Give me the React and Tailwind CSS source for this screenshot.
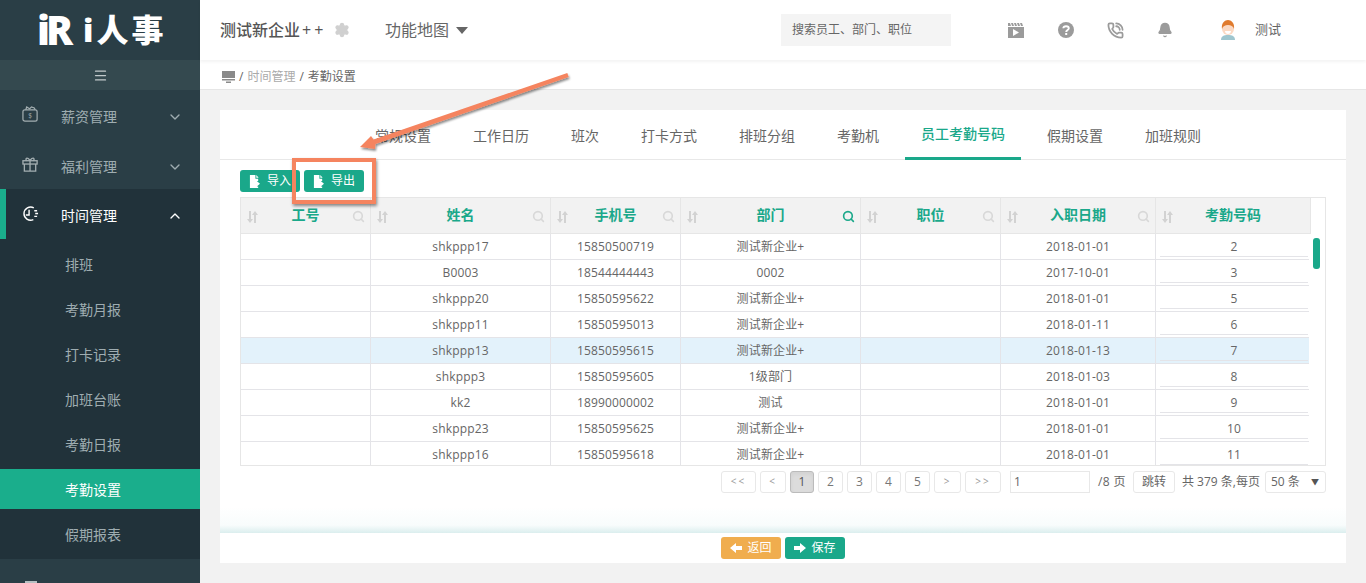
import React from 'react';
import { ChevronDown, ChevronUp, Menu, Search, Settings, Bell, PhoneCall } from 'lucide-react';

const font = { fontFamily: '"Open Sans", "Noto Sans CJK SC", sans-serif' };

const subMenu = ['排班', '考勤月报', '打卡记录', '加班台账', '考勤日报', '考勤设置', '假期报表'];
const tabs = ['常规设置', '工作日历', '班次', '打卡方式', '排班分组', '考勤机', '员工考勤号码', '假期设置', '加班规则'];
const columns = [
    { title: '工号', search: true },
    { title: '姓名', search: true },
    { title: '手机号', search: true },
    { title: '部门', search: true, active: true },
    { title: '职位', search: true },
    { title: '入职日期', search: true },
    { title: '考勤号码' },
];
const rows = [
    ['shkppp17', '15850500719', '测试新企业+', '2018-01-01', '2'],
    ['B0003', '18544444443', '0002', '2017-10-01', '3'],
    ['shkppp20', '15850595622', '测试新企业+', '2018-01-01', '5'],
    ['shkppp11', '15850595013', '测试新企业+', '2018-01-11', '6'],
    ['shkppp13', '15850595615', '测试新企业+', '2018-01-13', '7'],
    ['shkppp3', '15850595605', '1级部门', '2018-01-03', '8'],
    ['kk2', '18990000002', '测试', '2018-01-01', '9'],
    ['shkppp23', '15850595625', '测试新企业+', '2018-01-01', '10'],
    ['shkppp16', '15850595618', '测试新企业+', '2018-01-01', '11'],
];
const grid = 'grid w-[1070px] grid-cols-[130px_180px_130px_180px_140px_155px_155px]';

const FileIcon = () => (
    <svg viewBox="0 0 12 14" className="w-[11px] h-[13px]" fill="#fff">
        <path d="M1 0h6v4h3v2.500h-1.500L12 9.500 8.500 12.500H10V14H1z" />
        <path d="M8 0l2.500 3H8z" />
    </svg>
);

const SortIcon = () => (
    <svg viewBox="0 0 11 12" className="absolute left-[6px] top-[13px] w-[11px] h-[12px]" fill="#d2d2d2">
        <path d="M2 0h2v8h2L3 12 0 8h2zM7 4H5l3-4 3 4H9v8H7z" />
    </svg>
);

const ArrowIcon = ({ left }) => (
    <svg viewBox="0 0 12 10" className={`w-[12px] h-[10px] ${left ? 'rotate-180' : ''}`} fill="#fff">
        <path d="M0 3h6V0l6 5-6 5V7H0z" />
    </svg>
);

const NavItem = ({ icon, label, open }) => (
    <div className={`relative flex items-center h-[50px] pt-[4px] pl-[61px] pr-[17px] text-sm ${open ? 'bg-[#21323a] text-white' : 'text-[#9fadb1]'}`}>
        {open && <div className="absolute left-0 top-0 bottom-0 w-[6px] bg-[#1aae8c]" />}
        <span className={`absolute left-[22px] top-[16px] ${open ? 'text-white' : 'text-[#a3aeb1]'}`}>{icon}</span>
        <span className="flex-1">{label}</span>
        {open ? <ChevronUp size={16} /> : <ChevronDown size={16} />}
    </div>
);

const SalaryIcon = () => (
    <svg viewBox="0 0 18 18" className="w-[17px] h-[17px]" fill="none" stroke="currentColor" strokeWidth="1.300">
        <rect x="1" y="4" width="15" height="12" rx="2" />
        <path d="M4 4l1-3 3 2 2-2 3 1 1 2" />
        <text x="8.500" y="13" fontSize="7" textAnchor="middle" fill="currentColor" stroke="none">$</text>
    </svg>
);
const GiftIcon = () => (
    <svg viewBox="0 0 18 18" className="w-[17px] h-[17px]" fill="none" stroke="currentColor" strokeWidth="1.400">
        <rect x="1" y="5" width="15" height="3.500" />
        <path d="M2.500 8.500V16h12V8.500M8.500 5v11M5 5C3 3 5 .5 8.500 4.500 12 .5 14 3 12 5" />
    </svg>
);
const ClockIcon = () => (
    <svg viewBox="0 0 18 18" className="w-[17px] h-[17px]" fill="none" stroke="currentColor" strokeWidth="1.500">
        <path d="M12.500 3A7 7 0 1 0 12 15.500" />
        <path d="M7.500 5v5.500H4M13 6h3M14 9h3M13 12h3" />
    </svg>
);
const VideoIcon = () => (
    <svg viewBox="0 0 16 15" className="w-[16px] h-[15px]">
        <path fill="#9b9b9b" d="M0 0h2l1 3H0zM3 0h2l1 3H4zM6 0h2l1 3H7zM9 0h2l1 3h-2zM12 0h2l1 3h-2zM0 4h16v11H0z" />
        <path fill="#fff" d="M5 6l6 3.500L5 13z" />
    </svg>
);
const HelpIcon = () => (
    <svg viewBox="0 0 16 16" className="w-[16px] h-[16px]">
        <circle cx="8" cy="8" r="8" fill="#9b9b9b" />
        <path d="M5.300 6.200C5.500 3.500 10.800 3.500 10.800 6.300 10.800 8 8.200 8 8.200 10" fill="none" stroke="#fff" strokeWidth="1.900" />
        <rect x="7.200" y="11" width="2" height="2" fill="#fff" />
    </svg>
);
const ScreenIcon = () => (
    <svg viewBox="0 0 13 12" className="w-[13px] h-[12px]" fill="#8a8a8a">
        <path d="M0 0h13v7H0zM0 8h13v1.500H0zM4 10.500h5V12H4z" />
    </svg>
);
const Avatar = () => (
    <svg viewBox="0 0 18 20" className="w-[18px] h-[20px]">
        <path fill="#9fc6cf" d="M2 20c0-4 3-5 7-5s7 1 7 5z" />
        <circle cx="9" cy="9" r="6" fill="#fbd9c3" />
        <path fill="#e07b2e" d="M3 9C2 3 6 0 9 0s7 3 6 9c-1-3-3-4-6-4S4 6 3 9z" />
        <path fill="#fff" d="M6 11h6c0 2-1.500 3-3 3s-3-1-3-3z" />
    </svg>
);

const PageBtn = ({ children, w = 'w-[25px]', active, faint }) => (
    <div className={`h-[22px] ${w} flex items-center justify-center rounded-[3px] border ${faint ? 'text-[10px] tracking-[2px] text-[#999]' : 'text-xs'} ${active ? 'bg-[#dcdcdc] border-[#bbb] text-[#555] shadow-inner' : 'bg-white border-[#e8e8e8] text-[#777]'}`}>
        {children}
    </div>
);

export default function App() {
    return (
        <div className="relative flex w-[1366px] h-[583px] overflow-hidden bg-[#f2f2f2] text-[#666]" style={font}>
            {/* sidebar */}
            <aside className="w-[200px] shrink-0 bg-[#2a3e46] flex flex-col overflow-hidden">
                <div className="h-[60px] shrink-0 flex items-center pl-[37px] text-white font-black">
                    <span className="w-[46px] text-[40px] leading-none tracking-[-4px]">iR</span>
                    <span className="text-[32px] leading-none tracking-[3px]">i人事</span>
                </div>
                <div className="h-[30px] shrink-0 bg-[#34494f] flex items-center justify-center text-[#c2cacc]">
                    <Menu size={15} />
                </div>
                <NavItem icon={<SalaryIcon />} label="薪资管理" />
                <NavItem icon={<GiftIcon />} label="福利管理" />
                <NavItem icon={<ClockIcon />} label="时间管理" open />
                <div className="bg-[#21323a] pt-[5px] pb-[5px] flex flex-col gap-[5px]">
                    {subMenu.map(s => (
                        <div key={s} className={`h-[40px] pt-[1px] flex items-center pl-[65px] text-sm ${s === '考勤设置' ? 'bg-[#1aae8c] text-white' : 'text-[#9fadb1]'}`}>
                            {s}
                        </div>
                    ))}
                </div>
                <div className="flex-1 pl-[25px] pt-[22px]">
                    <div className="w-[12px] h-[2px] bg-[#b5bfc2]" />
                </div>
            </aside>

            <main className="flex-1 min-w-0 flex flex-col">
                {/* top bar */}
                <header className="h-[60px] bg-white shadow-[0_2px_3px_rgba(0,0,0,0.05)] flex items-center pl-[20px] z-10">
                    <span className="w-[113px] text-base font-medium text-[#555]">测试新企业<span className="ml-[2px] tracking-[3px]">++</span></span>
                    <Settings size={16} className="text-[#d0d0d0] ml-[1px]" fill="#d0d0d0" />
                    <span className="ml-[35px] text-base text-[#666]">功能地图</span>
                    <span className="ml-[7px] w-0 h-0 border-x-[6px] border-x-transparent border-t-[7px] border-t-[#666]" />
                    <div className="ml-[313px] w-[170px] h-[32px] bg-[#f4f4f4] flex items-center pl-[11px] text-xs text-[#666]">搜索员工、部门、职位</div>
                    <div className="ml-[57px] flex items-center gap-[34px] text-[#9b9b9b]">
                        <VideoIcon />
                        <HelpIcon />
                        <PhoneCall size={17} strokeWidth={2.500} className="-ml-[1px]" />
                        <Bell size={16} fill="#9b9b9b" className="-ml-[1px]" />
                    </div>
                    <div className="ml-[46px]"><Avatar /></div>
                    <span className="ml-[18px] text-[13px]">测试</span>
                </header>

                {/* breadcrumb */}
                <div className="h-[30px] bg-white border-b border-[#e6e6e6] flex items-center pl-[22px] pt-[4px] text-xs gap-[4px]">
                    <ScreenIcon />
                    <span>/</span>
                    <span className="text-[#aaa]">时间管理</span>
                    <span>/</span>
                    <span>考勤设置</span>
                </div>

                {/* content */}
                <div className="flex-1 px-[20px] pt-[20px] flex flex-col">
                    <section className="relative h-[423px] bg-white flex flex-col">
                        <div className="h-[50px] border-b border-[#e8e8e8] flex justify-center pl-[10px] gap-[42px] text-sm">
                            {tabs.map(t => (
                                <div key={t} className={`h-[50px] pt-[1px] flex items-center ${t === '员工考勤号码' ? '-mx-[16px] px-[16px] border-b-[3px] border-[#1aa88a] text-[#1aa88a] font-medium' : ''}`}>
                                    {t}
                                </div>
                            ))}
                        </div>
                        <div className="relative z-10 px-[20px] pt-[10px] flex-1">
                            <div className="flex gap-[4px] h-[22px]">
                                {['导入', '导出'].map(b => (
                                    <button key={b} className="w-[60px] h-[22px] rounded-[3px] bg-[#1aa88a] text-white text-xs flex items-center justify-center gap-[7px]">
                                        <FileIcon />{b}
                                    </button>
                                ))}
                            </div>
                            {/* table */}
                            <div className="relative mt-[5px] h-[269px] border border-[#e6e6e6] overflow-hidden bg-white">
                                <div className={`${grid} h-[36px] bg-[#f2f2f2] border-b border-[#e6e6e6]`}>
                                    {columns.map(c => (
                                        <div key={c.title} className="relative flex items-center justify-center pb-[2px] border-r border-[#e6e6e6] text-sm font-bold text-[#1aa88a]">
                                            <SortIcon />
                                            {c.title}
                                            {c.search && <Search size={13} strokeWidth={3} className={`absolute right-[5px] top-[12px] ${c.active ? 'text-[#1aa88a]' : 'text-[#d8d8d8]'}`} />}
                                        </div>
                                    ))}
                                </div>
                                {rows.map(r => (
                                    <div key={r[0]} className={`${grid} !w-[1068px] h-[26px] border-b border-[#e4e4e8] text-xs tracking-[0.15px] ${r[0] === 'shkppp13' ? 'bg-[#e3f2fb]' : ''}`}>
                                        <div className="border-r border-[#e4e4e8]" />
                                        <div className="flex items-center justify-center border-r border-[#e4e4e8]">{r[0]}</div>
                                        <div className="flex items-center justify-center border-r border-[#e4e4e8]">{r[1]}</div>
                                        <div className="flex items-center justify-center border-r border-[#e4e4e8]">{r[2]}</div>
                                        <div className="border-r border-[#e4e4e8]" />
                                        <div className="flex items-center justify-center border-r border-[#e4e4e8]">{r[3]}</div>
                                        <div className="flex items-center justify-center h-[23px] pt-[3px] ml-[4px] mr-[3px] border-b border-[#e4e4e8]">{r[4]}</div>
                                    </div>
                                ))}
                                <div className="absolute right-[5px] top-[40px] w-[7px] h-[31px] rounded-[3px] bg-[#1aa88a]" />
                            </div>
                            {/* pagination */}
                            <div className="mt-[5px] flex items-center justify-end text-xs">
                                <div className="flex gap-[4px]">
                                    <PageBtn w="w-[35px]" faint>&lt;&lt;</PageBtn>
                                    <PageBtn w="w-[26px]" faint>&lt;</PageBtn>
                                    <PageBtn w="w-[24px]" active>1</PageBtn>
                                    <PageBtn>2</PageBtn>
                                    <PageBtn>3</PageBtn>
                                    <PageBtn>4</PageBtn>
                                    <PageBtn>5</PageBtn>
                                    <PageBtn w="w-[27px]" faint>&gt;</PageBtn>
                                    <PageBtn w="w-[36px]" faint>&gt;&gt;</PageBtn>
                                </div>
                                <div className="ml-[9px] w-[80px] h-[22px] border border-[#e8e8e8] flex items-center pl-[3px]">1</div>
                                <span className="ml-[8px] w-[28px] tracking-[0.4px]">/8 页</span>
                                <div className="ml-[7px] w-[42px] h-[22px] border border-[#e8e8e8] rounded-[3px] flex items-center justify-center">跳转</div>
                                <span className="ml-[7px] w-[79px] whitespace-nowrap">共 379 条,每页</span>
                                <div className="ml-[4px] w-[61px] h-[22px] border border-[#e8e8e8] rounded-[3px] flex items-center justify-between pl-[5px] pr-[6px]">
                                    50 条<span className="text-[8px] text-[#555]">▼</span>
                                </div>
                            </div>
                        </div>
                        <div className="absolute left-0 right-0 bottom-0 h-[26px] bg-gradient-to-b from-white via-[#f8fcfc] via-70% to-[#dbeeee]" />
                    </section>
                    <div className="h-[30px] bg-white flex items-center justify-center gap-[4px]">
                        <button className="w-[60px] h-[22px] rounded-[3px] bg-[#f0ad4e] text-white text-xs flex items-center justify-center gap-[5px]"><ArrowIcon left />返回</button>
                        <button className="w-[60px] h-[22px] rounded-[3px] bg-[#1aa88a] text-white text-xs flex items-center justify-center gap-[5px]"><ArrowIcon />保存</button>
                    </div>
                </div>
            </main>

            {/* annotation drawn over the page */}
            <div className="absolute z-20 left-[292px] top-[158px] w-[84px] h-[46px] border-[4px] border-[#f5845f] shadow-[1px_2px_3px_rgba(0,0,0,0.45)]" />
            <svg className="absolute z-20 left-[340px] top-[60px] w-[250px] h-[100px] pointer-events-none" viewBox="0 0 250 100">
                <defs>
                    <filter id="arrowShadow"><feDropShadow dx="1" dy="2" stdDeviation="1.200" floodOpacity="0.45" /></filter>
                </defs>
                <path d="M20 87L31 76L33.500 79.500L227.300 13.100L228.700 16.900L35.500 84L35 89Z" fill="#f5845f" filter="url(#arrowShadow)" />
            </svg>
        </div>
    );
}
